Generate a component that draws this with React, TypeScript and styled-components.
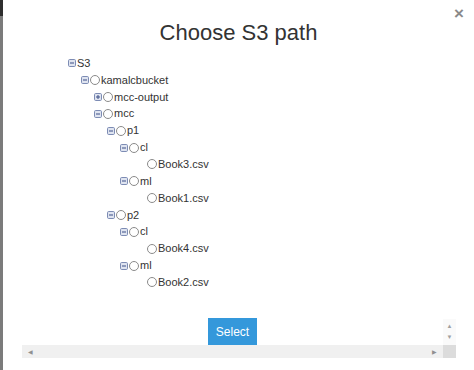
import React from 'react'
import styled, { createGlobalStyle } from 'styled-components'

const GlobalStyle = createGlobalStyle`
  html, body {
    margin: 0;
    padding: 0;
    background: #fff;
    font-family: "Liberation Sans", Arial, sans-serif;
    color: #333;
  }
`

type TreeNode = {
  name: string
  children?: TreeNode[]
  collapsed?: boolean
  noRadio?: boolean
}

const tree: TreeNode = {
  name: 'S3',
  noRadio: true,
  children: [
    {
      name: 'kamalcbucket',
      children: [
        { name: 'mcc-output', collapsed: true, children: [] },
        {
          name: 'mcc',
          children: [
            {
              name: 'p1',
              children: [
                { name: 'cl', children: [{ name: 'Book3.csv' }] },
                { name: 'ml', children: [{ name: 'Book1.csv' }] },
              ],
            },
            {
              name: 'p2',
              children: [
                { name: 'cl', children: [{ name: 'Book4.csv' }] },
                { name: 'ml', children: [{ name: 'Book2.csv' }] },
              ],
            },
          ],
        },
      ],
    },
  ],
}

// Styled components
const Page = styled.div`
  display: flex;
  width: 474px;
  height: 370px;
  overflow: hidden;
`

const Backdrop = styled.div`
  width: 3px;
  flex: none;
  background: linear-gradient(#2e2e2e 0, #2e2e2e 16px, #7b7b7b 16px);
`

const Modal = styled.div`
  flex: 1;
  display: flex;
  flex-direction: column;
  background: #fff;
`

const Header = styled.div`
  display: grid;
  grid-template-columns: 1fr auto 1fr;
  height: 55px;
`

const Title = styled.h2`
  grid-column: 2;
  margin: 0;
  padding-top: 20px;
  font-size: 22px;
  font-weight: normal;
  line-height: 26px;
  color: #333;
`

const Close = styled.button`
  grid-column: 3;
  justify-self: end;
  align-self: start;
  margin: 5px 10px 0 0;
  padding: 0;
  border: none;
  background: none;
  font-family: "Liberation Sans", Arial, sans-serif;
  font-size: 17px;
  font-weight: bold;
  line-height: 18px;
  color: #8a8a8a;
  cursor: pointer;
`

const Tree = styled.ul`
  list-style: none;
  margin: 0;
  padding: 0 0 0 65px;
  height: 264px;
`

const Branch = styled.ul`
  list-style: none;
  margin: 0;
  padding: 0 0 0 13px;
`

const Row = styled.div<{ $leaf?: boolean }>`
  display: flex;
  align-items: center;
  height: 16.85px;
  font-size: 11px;
  padding-left: ${(p) => (p.$leaf ? '14px' : '0')};
  white-space: nowrap;
`

const ToggleBox = styled.svg`
  width: 8px;
  height: 8px;
  margin-right: 1px;
  flex: none;
`

const Radio = styled.span`
  width: 8px;
  height: 8px;
  border: 1px solid #8a8a8a;
  border-radius: 50%;
  margin-right: 1px;
  flex: none;
`

const Label = styled.span`
  line-height: 13px;
`

const Footer = styled.div`
  display: grid;
  grid-template-columns: 1fr 13px;
  grid-template-rows: 26px 13px;
  margin: 0 18px 0 19px;
`

const ButtonCell = styled.div`
  display: flex;
  justify-content: center;
  margin-top: -1px;
`

const SelectButton = styled.button`
  height: 27px;
  padding: 0 8px;
  border: none;
  background: #3498db;
  color: #fff;
  font-family: "Liberation Sans", Arial, sans-serif;
  font-size: 12px;
  cursor: pointer;
`

const VScroll = styled.div`
  display: flex;
  flex-direction: column;
  justify-content: space-between;
  align-items: center;
  padding: 3px 0 4px;
  background: #fafafa;
  font-size: 6px;
  line-height: 8px;
  color: #a0a0a0;
`

const HScroll = styled.div`
  display: flex;
  justify-content: space-between;
  align-items: center;
  padding: 0 6px;
  background: #f0f0f0;
  font-size: 6px;
  color: #909090;
`

const Corner = styled.div`
  background: #dcdcdc;
`

const Toggle: React.FC<{ open: boolean }> = ({ open }) => (
  <ToggleBox viewBox="0 0 8 8">
    <rect x="0.5" y="0.5" width="7" height="7" rx="1.2" fill="#dfe4f0" stroke="#7d8cb4" />
    <rect x="2" y="3.5" width="4" height="1" fill="#3d4f86" />
    {!open && <rect x="3.5" y="2" width="1" height="4" fill="#3d4f86" />}
  </ToggleBox>
)

const Node: React.FC<{ node: TreeNode }> = ({ node }) => {
  const isLeaf = !node.children
  const open = !node.collapsed
  return (
    <li>
      <Row $leaf={isLeaf}>
        {!isLeaf && <Toggle open={open} />}
        {!node.noRadio && <Radio />}
        <Label>{node.name}</Label>
      </Row>
      {node.children && open && node.children.length > 0 && (
        <Branch>
          {node.children.map((c, i) => (
            <Node key={c.name + i} node={c} />
          ))}
        </Branch>
      )}
    </li>
  )
}

const App: React.FC = () => {
  return (
    <Page>
      <GlobalStyle />
      <Backdrop />
      <Modal>
        <Header>
          <Title>Choose S3 path</Title>
          <Close>×</Close>
        </Header>
        <Tree>
          <Node node={tree} />
        </Tree>
        <Footer>
          <ButtonCell>
            <SelectButton>Select</SelectButton>
          </ButtonCell>
          <VScroll>
            <span>▲</span>
            <span>▼</span>
          </VScroll>
          <HScroll>
            <span>◀</span>
            <span>▶</span>
          </HScroll>
          <Corner />
        </Footer>
      </Modal>
    </Page>
  )
}

export default App
